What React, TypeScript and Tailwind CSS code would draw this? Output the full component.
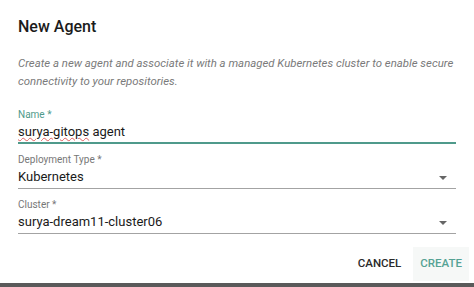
import { ReactNode } from 'react';

function Caret() {
  return (
    <svg width="8" height="4" viewBox="0 0 8 4" className="shrink-0">
      <path d="M0 0 L8 0 L4 4 Z" fill="#666" />
    </svg>
  );
}

function Field({
  label,
  focused,
  select,
  children,
}: {
  label: string;
  focused?: boolean;
  select?: boolean;
  children: ReactNode;
}) {
  return (
    <div className="flex flex-col">
      <label
        className={`h-[11px] text-[10px] leading-[11px] ${focused ? 'text-[#4f9a8b]' : 'text-[#777]'}`}>
        {label} *
      </label>
      <div
        className={`flex items-center justify-between h-[24px] pt-[1px] ${
          focused ? 'border-b-2 border-[#4f9a8b]' : 'border-b border-[#a3a3a3]'
        }`}>
        <span className="text-[13px] text-[#1a1a1a] leading-[18px]">{children}</span>
        {select && (
          <span className="pr-[9px] pt-[1px]">
            <Caret />
          </span>
        )}
      </div>
    </div>
  );
}

export default function App() {
  return (
    <div
      className="w-[474px] h-[287px] bg-white flex flex-col overflow-hidden"
      style={{ fontFamily: 'Roboto, "Liberation Sans", sans-serif' }}>
      {/* Dialog body */}
      <div className="flex flex-col pl-[18px] pr-[18px]">
        <h2 className="mt-[17px] text-[16px] leading-[20px] font-medium text-[#1b1b1b]">
          New Agent
        </h2>

        <p className="mt-[17px] text-[11.4px] leading-[18px] italic text-[#7a7a7a]">
          Create a new agent and associate it with a managed Kubernetes cluster to enable secure
          connectivity to your repositories.
        </p>

        <div className="mt-[19px] flex flex-col gap-[10px]">
          <Field label="Name" focused>
            <span className="underline decoration-wavy decoration-[#e06060] decoration-[1px] underline-offset-[1px]">
              surya-gitops
            </span>{' '}
            agent
          </Field>
          <Field label="Deployment Type" select>
            Kubernetes
          </Field>
          <Field label="Cluster" select>
            surya-dream11-cluster06
          </Field>
        </div>
      </div>

      {/* Actions */}
      <div className="mt-auto mb-[2px] pr-[5px] flex justify-end items-center gap-[4px]">
        <button className="h-[34px] px-[8px] text-[11.5px] font-medium text-[#2a2a2a]">
          CANCEL
        </button>
        <button className="h-[34px] px-[7px] bg-[#f6f8f7] text-[11.5px] font-medium text-[#55a294]">
          CREATE
        </button>
      </div>
      <div className="h-[4px] bg-[#5a5a5a]" />
    </div>
  );
}
